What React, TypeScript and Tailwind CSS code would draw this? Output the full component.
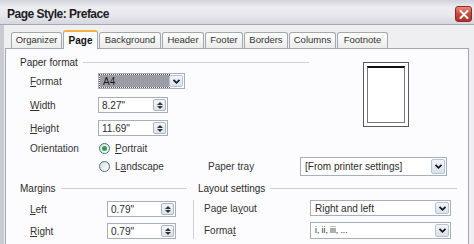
import type { ReactNode } from "react";

const FONT = "font-['Liberation_Sans',Arial,sans-serif]";

function Chevron() {
  return (
    <svg width="9" height="7" viewBox="0 0 9 7">
      <path d="M1.5 1.8 L4.5 4.8 L7.5 1.8" fill="none" stroke="#1a1a1a" strokeWidth="1.8" />
    </svg>
  );
}

function DropButton() {
  return (
    <span className="flex h-full w-[14px] shrink-0 items-center justify-center rounded-[2px] border border-[#b9c3d3] bg-[linear-gradient(#f2f5fa,#d9e0ea)]">
      <Chevron />
    </span>
  );
}

function Select({
  width,
  height = "h-[16px]",
  selected,
  small,
  children,
}: {
  width: string;
  height?: string;
  selected?: boolean;
  small?: boolean;
  children: ReactNode;
}) {
  return (
    <div
      className={`flex ${height} ${width} shrink-0 items-stretch border border-[#a5afbd] bg-white p-px`}
    >
      <span
        className={`flex flex-1 items-center pl-[3px] ${small ? "text-[8.5px]" : "text-[10px]"} ${
          selected ? "bg-[#9d9da6] text-[#1b1b1b] outline outline-dotted outline-[#555]" : "text-[#2b2b2b]"
        }`}
      >
        {children}
      </span>
      <DropButton />
    </div>
  );
}

function Spin() {
  return (
    <span className="mr-[1px] flex h-[12px] w-[13px] flex-col items-center justify-center gap-[1px] rounded-[2px] border border-[#a9b4c4] bg-[linear-gradient(#f4f6fa,#dde3ec)]">
      <svg width="6" height="3" viewBox="0 0 6 3">
        <path d="M0 3 L3 0 L6 3 Z" fill="#333" />
      </svg>
      <svg width="6" height="3" viewBox="0 0 6 3">
        <path d="M0 0 L3 3 L6 0 Z" fill="#333" />
      </svg>
    </span>
  );
}

function SpinField({ width, value }: { width: string; value: string }) {
  return (
    <div
      className={`flex h-[16px] ${width} shrink-0 items-center justify-between border border-[#a5afbd] bg-white pl-[3px] text-[10px] text-[#2b2b2b]`}
    >
      <span>{value}</span>
      <Spin />
    </div>
  );
}

function Radio({ checked }: { checked?: boolean }) {
  return (
    <span className="flex h-[11px] w-[11px] shrink-0 items-center justify-center rounded-full border border-[#3f6f8f] bg-[linear-gradient(135deg,#dcdcdc,#ffffff)]">
      {checked ? <span className="h-[5px] w-[5px] rounded-full bg-[#27a83a]" /> : null}
    </span>
  );
}

function Heading({ label, width }: { label: string; width: string }) {
  return (
    <div className={`flex h-[14px] ${width} items-center gap-[5px]`}>
      <span className="whitespace-nowrap text-[10px] text-[#2a2a2a]">{label}</span>
      <span className="h-px flex-1 bg-[#d0d0d0]" />
    </div>
  );
}

function Label({ width, children }: { width: string; children: ReactNode }) {
  return <span className={`${width} shrink-0 pl-[10px] text-[10px] text-[#333]`}>{children}</span>;
}

const TABS = [
  { name: "Organizer", w: "w-[51px]" },
  { name: "Page", w: "w-[35px]", active: true },
  { name: "Background", w: "w-[62px]" },
  { name: "Header", w: "w-[42px]" },
  { name: "Footer", w: "w-[38px]" },
  { name: "Borders", w: "w-[44px]" },
  { name: "Columns", w: "w-[47px]" },
  { name: "Footnote", w: "w-[51px]" },
];

export default function App() {
  return (
    <div className={`h-[244px] w-[474px] overflow-hidden bg-[#efeff2] ${FONT}`}>
      <div className="flex h-[25px] items-center justify-between border-b border-[#a8a8b2] bg-[linear-gradient(#d2d2da,#ececf1_30%,#e9e9ef_60%,#d6d6de)] pr-[2px] pl-[7px] pt-[4px]">
        <span className="text-[12px] font-bold tracking-[-0.5px] text-[#1c1c24]">Page Style: Preface</span>
        <span className="flex h-[16px] w-[17px] items-center justify-center rounded-[3px] border border-[#8e2a22] bg-[linear-gradient(#ec8a78,#c9463a_50%,#b23226)]">
          <svg width="10" height="9" viewBox="0 0 10 9">
            <path d="M1.5 1 L8.5 8 M8.5 1 L1.5 8" stroke="#fff" strokeWidth="2" strokeLinecap="round" />
          </svg>
        </span>
      </div>

      <div className="h-full border-l-[4px] border-[#cacad2] pl-px">
        <div className="flex h-[23px] items-end gap-px pl-[6px]">
          {TABS.map((t) => (
            <div
              key={t.name}
              className={`${t.w} relative flex shrink-0 items-center justify-center rounded-t-[3px] border border-[#a2a9ae] ${
                t.active
                  ? "z-10 -mb-px h-[19px] border-t-2 border-b-0 border-t-[#f4b23c] bg-[#fcfcfe] text-[10px] font-bold text-[#111]"
                  : "h-[16px] border-b-0 bg-[linear-gradient(#ffffff,#ebebe9)] text-[9.5px] text-[#333]"
              }`}
            >
              {t.name}
            </div>
          ))}
        </div>

        <div className="h-[200px] w-[464px] border border-[#a2a9ae] bg-[#fcfcfe] pl-[14px]">
          <div className="flex">
            <div className="flex w-[289px] flex-col">
              <div className="mt-[6px]">
                <Heading label="Paper format" width="w-[289px]" />
              </div>
              <div className="mt-[4px] flex h-[16px] items-center">
                <Label width="w-[78px]">
                  <span className="underline">F</span>ormat
                </Label>
                <Select width="w-[87px]" selected>
                  A4
                </Select>
              </div>
              <div className="mt-[8px] flex h-[16px] items-center">
                <Label width="w-[78px]">
                  <span className="underline">W</span>idth
                </Label>
                <SpinField width="w-[70px]" value='8.27"' />
              </div>
              <div className="mt-[7px] flex h-[16px] items-center">
                <Label width="w-[78px]">
                  <span className="underline">H</span>eight
                </Label>
                <SpinField width="w-[70px]" value='11.69"' />
              </div>
              <div className="mt-[4px] flex h-[16px] items-center">
                <Label width="w-[78px]">Orientation</Label>
                <span className="flex items-center gap-[5px] pl-px text-[10px] text-[#333]">
                  <Radio checked />
                  <span>
                    <span className="underline">P</span>ortrait
                  </span>
                </span>
              </div>
            </div>
            <div className="mt-[13px] ml-[54px] flex h-[65px] w-[46px] items-center justify-center border border-[#5a5a5a] bg-white">
              <div className="h-[57px] w-[38px] border border-t-2 border-[#777] border-t-[#111] bg-white" />
            </div>
          </div>

          <div className="mt-px flex h-[18px] items-center">
            <Label width="w-[78px]">{""}</Label>
            <span className="flex w-[110px] items-center gap-[5px] pl-px text-[10px] text-[#333]">
              <Radio />
              <span>
                L<span className="underline">a</span>ndscape
              </span>
            </span>
            <span className="w-[92px] text-[10px] text-[#333]">Paper tray</span>
            <Select width="w-[147px]" height="h-[19px]">
              [From printer settings]
            </Select>
          </div>

          <div className="mt-[6px] flex">
            <Heading label="Margins" width="w-[167px]" />
            <div className="ml-[11px]">
              <Heading label="Layout settings" width="w-[259px]" />
            </div>
          </div>

          <div className="flex">
            <div className="flex w-[173px] flex-col">
              <div className="mt-[6px] flex h-[16px] items-center">
                <Label width="w-[87px]">
                  <span className="underline">L</span>eft
                </Label>
                <SpinField width="w-[69px]" value='0.79"' />
              </div>
              <div className="mt-[6px] flex h-[16px] items-center">
                <Label width="w-[87px]">
                  <span className="underline">R</span>ight
                </Label>
                <SpinField width="w-[69px]" value='0.79"' />
              </div>
            </div>
            <div className="mt-[5px] flex flex-col border-l border-[#d0d0d0]">
              <div className="flex h-[16px] items-center">
                <Label width="w-[116px]">
                  Page la<span className="underline">y</span>out
                </Label>
                <Select width="w-[141px]">Right and left</Select>
              </div>
              <div className="mt-[6px] flex h-[17px] items-center">
                <Label width="w-[116px]">
                  Forma<span className="underline">t</span>
                </Label>
                <Select width="w-[141px]" height="h-[17px]" small>
                  i, ii, iii, ...
                </Select>
              </div>
            </div>
          </div>
        </div>
      </div>
    </div>
  );
}
